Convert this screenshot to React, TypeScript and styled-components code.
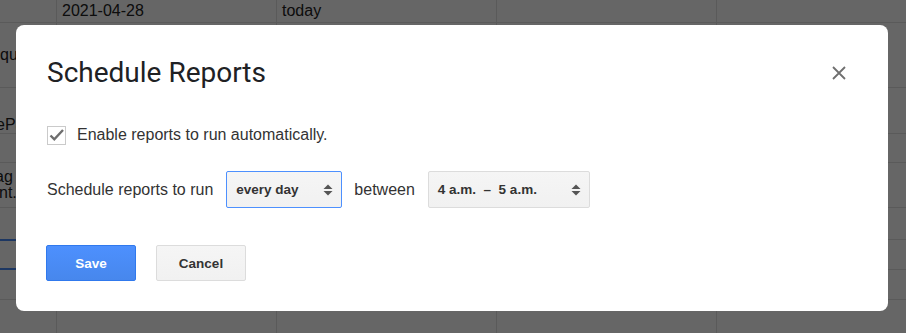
import React from 'react';
import styled, { createGlobalStyle } from 'styled-components';

const GlobalStyle = createGlobalStyle`
  html, body {
    margin: 0;
    padding: 0;
    background: #fff;
    overflow: hidden;
  }
  body {
    font-family: "Liberation Sans", Arial, sans-serif;
  }
`;

// Sheet behind the modal
const Sheet = styled.div`
  display: grid;
  grid-template-columns: 57px 220px 220px 220px 220px;
  grid-template-rows: 23px 65px 46px 29px 45px 32px 30px 30px 40px;
  width: 906px;
  height: 333px;
  overflow: hidden;
`;

const Cell = styled.div<{ $selected?: boolean; $valign?: string }>`
  border-right: 1px solid #e2e2e2;
  border-bottom: 1px solid #e2e2e2;
  font-size: 16px;
  line-height: 16px;
  color: #222;
  padding: 0 5px;
  white-space: nowrap;
  overflow: hidden;
  display: flex;
  flex-direction: column;
  justify-content: ${(p) => p.$valign || 'center'};
  ${(p) =>
    p.$selected &&
    `
    border-top: 2px solid #4a8af4;
    border-bottom: 2px solid #4a8af4;
    margin-top: -1px;
  `}
`;

const EdgeText = styled.span<{ $shift: number }>`
  margin-left: ${(p) => p.$shift}px;
`;

const Overlay = styled.div`
  position: fixed;
  inset: 0;
  background: rgba(0, 0, 0, 0.6);
  padding: 25px 0 0 16px;
`;

const Dialog = styled.div`
  width: 872px;
  height: 286px;
  box-sizing: border-box;
  background: #fff;
  border-radius: 8px;
  padding: 32px 31px 0 31px;
  display: flex;
  flex-direction: column;
`;

const Header = styled.div`
  display: flex;
  align-items: center;
  justify-content: space-between;
  height: 32px;
`;

const Title = styled.h2`
  margin: 0;
  font-family: Roboto, "Open Sans", sans-serif;
  font-weight: 400;
  font-size: 28px;
  line-height: 32px;
  color: #202124;
`;

const CloseButton = styled.button`
  border: 0;
  background: none;
  padding: 0;
  margin-right: 10px;
  width: 16px;
  height: 16px;
  display: flex;
  align-items: center;
  justify-content: center;
  cursor: pointer;
`;

const CheckRow = styled.label`
  display: flex;
  align-items: center;
  gap: 11px;
  margin-top: 36px;
  height: 20px;
  font-size: 16px;
  color: #333;
`;

const CheckBox = styled.span`
  width: 17px;
  height: 17px;
  border: 1px solid #cacaca;
  background: #fff;
  display: flex;
  align-items: center;
  justify-content: center;
`;

const ScheduleRow = styled.div`
  display: flex;
  align-items: center;
  margin-top: 26px;
  height: 37px;
  font-size: 16px;
  color: #333;
`;

const SelectBox = styled.div<{ $width: number; $focused?: boolean }>`
  box-sizing: border-box;
  width: ${(p) => p.$width}px;
  height: 37px;
  margin: 0 12px 0 13px;
  padding: 0 8px 0 9px;
  display: flex;
  align-items: center;
  justify-content: space-between;
  border: 1px solid ${(p) => (p.$focused ? '#4d90fe' : '#dcdcdc')};
  border-radius: 2px;
  background: linear-gradient(#f5f5f5, #f1f1f1);
  font-size: 13.5px;
  font-weight: 700;
  color: #333;
  white-space: pre;
`;

const Actions = styled.div`
  display: flex;
  gap: 20px;
  margin-top: 37px;
  margin-left: -1px;
`;

const Button = styled.button<{ $primary?: boolean }>`
  width: 90px;
  height: 36px;
  border-radius: 2px;
  font-family: "Liberation Sans", Arial, sans-serif;
  font-size: 13.5px;
  font-weight: 700;
  cursor: pointer;
  border: 1px solid ${(p) => (p.$primary ? '#3079ed' : '#dcdcdc')};
  color: ${(p) => (p.$primary ? '#fff' : '#333')};
  background: ${(p) =>
    p.$primary ? 'linear-gradient(#4d90fe, #4787ed)' : 'linear-gradient(#f5f5f5, #f1f1f1)'};
`;

const Arrows = () => (
  <svg width="10" height="12" viewBox="0 0 10 12">
    <path d="M0.5 5 L5 0.5 L9.5 5 Z" fill="#555" />
    <path d="M0.5 7 L5 11.5 L9.5 7 Z" fill="#555" />
  </svg>
);

const CloseIcon = () => (
  <svg width="14" height="14" viewBox="0 0 14 14">
    <path d="M1 1 L13 13 M13 1 L1 13" stroke="#6f6f6f" strokeWidth="1.8" />
  </svg>
);

const CheckMark = () => (
  <svg width="17" height="17" viewBox="0 0 17 17">
    <path d="M2.5 8.5 L6.3 12.3 L15 3" stroke="#6e6e6e" strokeWidth="2.4" fill="none" />
  </svg>
);

const rows: { first: React.ReactNode; second?: string; third?: string; valign?: string; selected?: boolean }[] = [
  { first: '', second: '2021-04-28', third: 'today' },
  { first: <EdgeText $shift={-5}>queue</EdgeText> },
  { first: <EdgeText $shift={-9}>ePage</EdgeText>, valign: 'flex-end' },
  { first: '' },
  { first: <><EdgeText $shift={-10}>ag</EdgeText><EdgeText $shift={-6}>nt.c</EdgeText></> },
  { first: '' },
  { first: '', selected: true },
  { first: '' },
  { first: '' },
];

export default function App() {
  return (
    <>
      <GlobalStyle />
      <Sheet>
        {rows.map((r, i) => (
          <React.Fragment key={i}>
            <Cell $valign={r.valign} $selected={r.selected}>{r.first}</Cell>
            <Cell>{r.second}</Cell>
            <Cell>{r.third}</Cell>
            <Cell />
            <Cell />
          </React.Fragment>
        ))}
      </Sheet>
      <Overlay>
        <Dialog>
          <Header>
            <Title>Schedule Reports</Title>
            <CloseButton aria-label="Close">
              <CloseIcon />
            </CloseButton>
          </Header>
          <CheckRow>
            <CheckBox>
              <CheckMark />
            </CheckBox>
            Enable reports to run automatically.
          </CheckRow>
          <ScheduleRow>
            Schedule reports to run
            <SelectBox $width={116} $focused>
              <span>every day</span>
              <Arrows />
            </SelectBox>
            between
            <SelectBox $width={162}>
              <span>4 a.m.  –  5 a.m.</span>
              <Arrows />
            </SelectBox>
          </ScheduleRow>
          <Actions>
            <Button $primary>Save</Button>
            <Button>Cancel</Button>
          </Actions>
        </Dialog>
      </Overlay>
    </>
  );
}
